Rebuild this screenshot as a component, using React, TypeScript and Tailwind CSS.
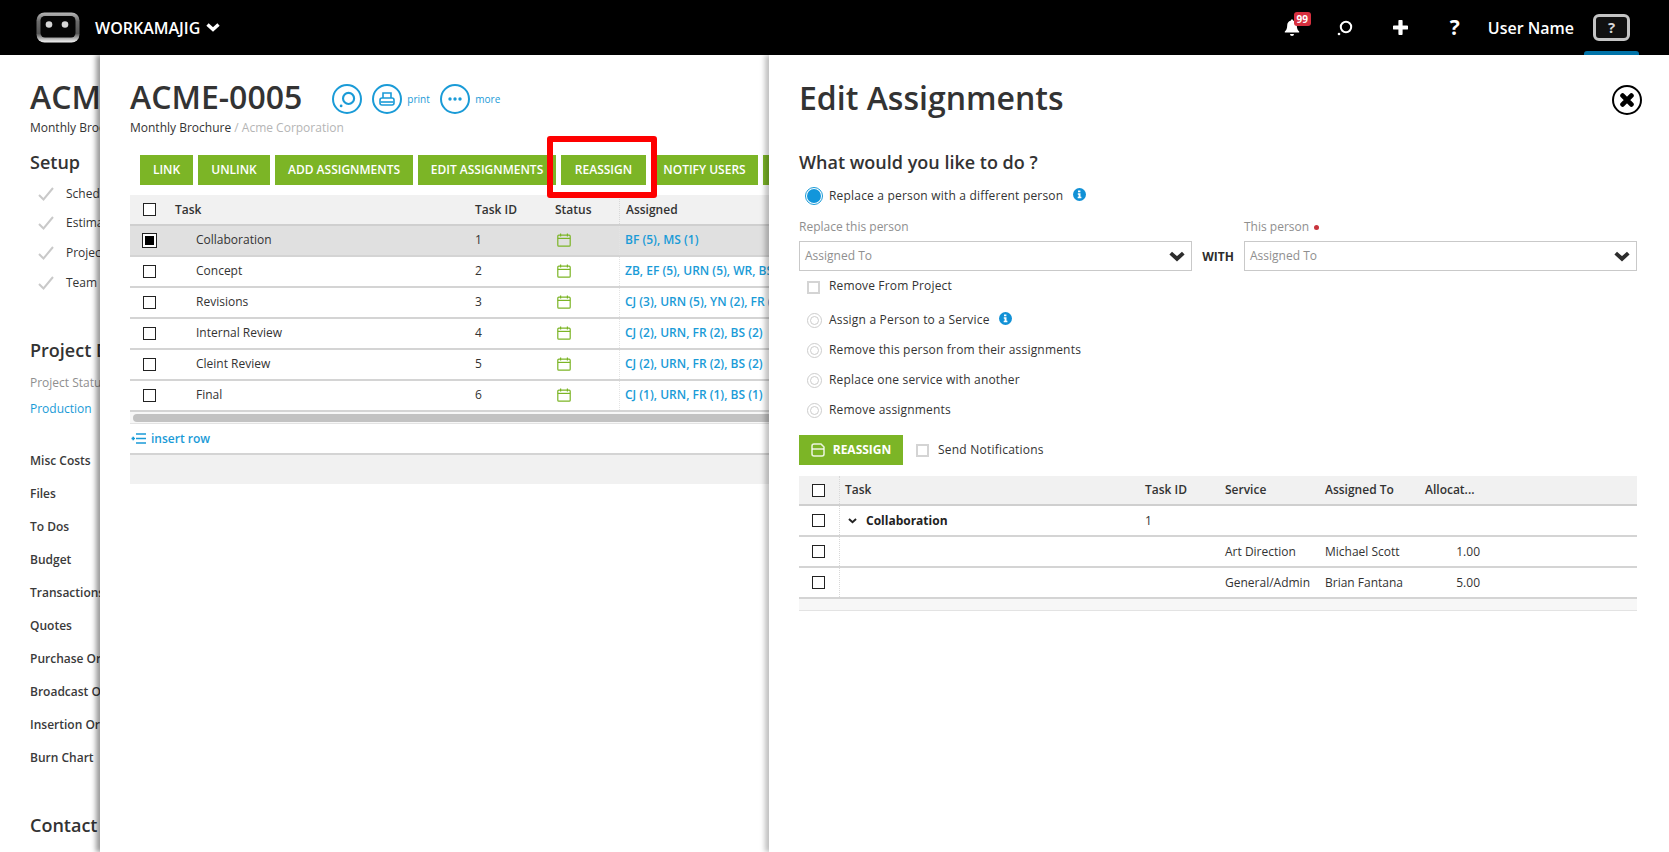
import React from "react";

const BLUE = "text-[#1a9bd7]";

function Logo() {
  return (
    <svg width="44" height="31" viewBox="0 0 44 31">
      <defs>
        <linearGradient id="lg" x1="0" y1="0" x2="0" y2="1">
          <stop offset="0" stopColor="#b8b8b8" />
          <stop offset="0.3" stopColor="#6a6a6a" />
          <stop offset="0.7" stopColor="#555" />
          <stop offset="0.92" stopColor="#d0d0d0" />
          <stop offset="1" stopColor="#f4f4f4" />
        </linearGradient>
      </defs>
      <rect x="0.5" y="0.5" width="43" height="30" rx="8" fill="url(#lg)" />
      <rect x="4.5" y="4" width="35" height="21.5" rx="4.5" fill="#050505" />
      <circle cx="13" cy="12.5" r="3.3" fill="#d6d6d6" />
      <circle cx="29" cy="12.5" r="3.3" fill="#d6d6d6" />
    </svg>
  );
}

function Chevron({ className = "", w = 14, h = 9, sw = 3.4 }: { className?: string; w?: number; h?: number; sw?: number }) {
  return (
    <svg width={w} height={h} viewBox="0 0 14 9" className={className} fill="none" stroke="currentColor" strokeWidth={sw}>
      <path d="M1.5 1.5 7 6.5l5.5-5" />
    </svg>
  );
}

function SearchGlyph({ size = 16, sw = 2 }: { size?: number; sw?: number }) {
  return (
    <svg width={size} height={size} viewBox="0 0 16 16" fill="none" stroke="currentColor" strokeWidth={sw}>
      <circle cx="9" cy="7" r="5.2" />
      <circle cx="2" cy="14" r="1.3" fill="currentColor" stroke="none" />
    </svg>
  );
}

function RoundIcon({ children }: { children: React.ReactNode }) {
  return (
    <span className={`flex h-[30px] w-[30px] items-center justify-center rounded-full border-2 border-[#1a9bd7] ${BLUE}`}>
      {children}
    </span>
  );
}

function Box({ light = false, checked = false }: { light?: boolean; checked?: boolean }) {
  if (checked) {
    return (
      <span className="flex h-[15px] w-[15px] items-center justify-center border border-[#222] bg-white">
        <span className="h-[9px] w-[9px] bg-black" />
      </span>
    );
  }
  return (
    <span className={`block h-[13px] w-[13px] bg-white ${light ? "border-2 border-[#d4d4d4]" : "border-[1.5px] border-[#222]"}`} />
  );
}

function Cal() {
  return (
    <svg width="14" height="14" viewBox="0 0 14 14" fill="none" stroke="#7cb526" strokeWidth="1.2">
      <rect x="0.8" y="2.2" width="12.4" height="11" rx="1" />
      <path d="M0.8 5.4h12.4" />
      <path d="M3.6 0.4v3M10.4 0.4v3" />
    </svg>
  );
}

function Info() {
  return (
    <svg width="13" height="13" viewBox="0 0 13 13">
      <circle cx="6.5" cy="6.5" r="6.5" fill="#1191d6" />
      <path d="M5 2.6h2.4v1.7H5zM4.8 5.2h2.7v3.6h.9v1.5H4.7V8.8h.9V6.7h-.8z" fill="#fff" />
    </svg>
  );
}

function Radio({ on = false }: { on?: boolean }) {
  if (on) {
    return (
      <span className="flex h-[18px] w-[18px] shrink-0 items-center justify-center rounded-full border border-[#1a9bd7] bg-white">
        <span className="h-[14px] w-[14px] rounded-full bg-[#1296db]" />
      </span>
    );
  }
  return (
    <span className="flex h-[15px] w-[15px] shrink-0 items-center justify-center rounded-full border-[1.5px] border-[#cdcdcd] bg-white">
      <span className="h-[9px] w-[9px] rounded-full border-[1.5px] border-[#cdcdcd]" />
    </span>
  );
}

function Btn({ children, className = "" }: { children: React.ReactNode; className?: string }) {
  return (
    <span className={`flex h-[30px] shrink-0 items-center justify-center bg-[#7cb526] text-[12px] font-semibold text-white ${className}`}>
      {children}
    </span>
  );
}

function Select() {
  return (
    <div className="flex h-[30px] items-center justify-between border border-[#c9c9c9] bg-white pl-[5px] pr-[6px] text-[12px] text-[#8f8f8f]">
      <span>Assigned To</span>
      <span className="text-[#2d2d2d]">
        <Chevron w={16} h={11} />
      </span>
    </div>
  );
}

const tasks: [string, string, string, boolean][] = [
  ["Collaboration", "1", "BF (5), MS (1)", true],
  ["Concept", "2", "ZB, EF (5), URN (5), WR, BS (2)", false],
  ["Revisions", "3", "CJ (3), URN (5), YN (2), FR (1)", false],
  ["Internal Review", "4", "CJ (2), URN, FR (2), BS (2)", false],
  ["Cleint Review", "5", "CJ (2), URN, FR (2), BS (2)", false],
  ["Final", "6", "CJ (1), URN, FR (1), BS (1)", false],
];

const sideLinks = ["Misc Costs", "Files", "To Dos", "Budget", "Transactions", "Quotes", "Purchase Orders", "Broadcast Orders", "Insertion Orders", "Burn Chart"];
const setup = ["Schedule", "Estimates", "Project Team", "Team"];

const radios: [string, boolean][] = [
  ["Assign a Person to a Service", true],
  ["Remove this person from their assignments", false],
  ["Replace one service with another", false],
  ["Remove assignments", false],
];

export default function App() {
  return (
    <div className="flex h-[852px] w-[1669px] flex-col overflow-hidden bg-white font-['Open_Sans',sans-serif] text-[#333]">
      {/* top bar */}
      <header className="relative z-30 flex h-[55px] shrink-0 items-center bg-black text-white">
        <div className="ml-[36px] flex items-center">
          <Logo />
          <span className="ml-[15px] text-[16px] font-semibold">WORKAMAJIG</span>
          <Chevron className="ml-[6px]" />
        </div>
        <div className="ml-auto flex items-center">
          <span className="relative flex w-[20px] justify-center">
            <svg width="16" height="17" viewBox="0 0 16 17" fill="#fff">
              <path d="M8 0.5c.8 0 1.2.5 1.3 1.2 2.3.5 3.5 2.4 3.5 4.8 0 3.2 1 4.7 2.4 6v1H.8v-1c1.4-1.3 2.4-2.8 2.4-6 0-2.4 1.2-4.3 3.5-4.8C6.8 1 7.2.5 8 .5z" />
              <path d="M6 15h4a2 2 0 0 1-4 0z" />
            </svg>
            <span className="absolute left-[12px] top-[-7px] flex h-[14px] w-[17px] items-center justify-center rounded-[3px] bg-[#d7303f] text-[10px] font-bold leading-none text-white">
              99
            </span>
          </span>
          <span className="ml-[35px]">
            <SearchGlyph />
          </span>
          <svg className="ml-[40px]" width="15" height="15" viewBox="0 0 15 15" fill="#fff">
            <path d="M5.4 1.4a2.1 2.1 0 0 1 4.2 0v4h4a2.1 2.1 0 0 1 0 4.2h-4v4a2.1 2.1 0 0 1-4.2 0v-4h-4a2.1 2.1 0 0 1 0-4.2h4z" />
          </svg>
          <span className="ml-[39px] w-[16px] text-center text-[21px] font-bold leading-none">?</span>
          <span className="ml-[25px] text-[16px] font-semibold">User Name</span>
          <span className="relative ml-[19px] mr-[39px] flex h-[27px] w-[37px] items-center justify-center rounded-[6px] border-[3.5px] border-[#c4c4c4] bg-[#111] text-[15px] font-bold text-[#d8d8d8]">
            ?
            <span className="absolute left-[-12px] top-[34px] h-[4px] w-[55px] rounded-t-[3px] bg-[#0073a8]" />
          </span>
        </div>
      </header>

      <div className="flex min-h-0 flex-1">
        {/* left background page */}
        <aside className="w-[100px] shrink-0 overflow-hidden whitespace-nowrap pl-[30px]">
          <h1 className="mt-[20px] h-[44px] text-[32px] font-semibold leading-[44px]">ACME-0005</h1>
          <p className="h-[18px] text-[12px] leading-[18px]">Monthly Brochure</p>
          <h2 className="mt-[12px] h-[26px] text-[18px] font-semibold leading-[26px]">Setup</h2>
          <ul className="mt-[4px]">
            {setup.map((s) => (
              <li key={s} className="flex h-[29.6px] items-center">
                <svg className="ml-[8px] shrink-0" width="16" height="14" viewBox="0 0 16 14" fill="none" stroke="#c9c9c9" strokeWidth="2">
                  <path d="M1 8l4.5 4.5L15 1" />
                </svg>
                <span className="ml-[12px] text-[12px]">{s}</span>
              </li>
            ))}
          </ul>
          <h2 className="mt-[40px] h-[26px] text-[18px] font-semibold leading-[26px]">Project Details</h2>
          <p className="mt-[11px] h-[18px] text-[12px] leading-[18px] text-[#8f8f8f]">Project Status</p>
          <p className={`mt-[8px] h-[18px] text-[12px] leading-[18px] ${BLUE}`}>Production</p>
          <ul className="mt-[26px]">
            {sideLinks.map((s) => (
              <li key={s} className="flex h-[33px] items-center text-[12px] font-semibold text-[#3a3a3a]">
                {s}
              </li>
            ))}
          </ul>
          <h2 className="mt-[38px] h-[26px] text-[18px] font-semibold leading-[26px]">Contact</h2>
        </aside>

        {/* middle panel */}
        <section className="relative z-10 w-[669px] shrink-0 overflow-hidden bg-white pl-[30px] shadow-[-4px_0_5px_rgba(0,0,0,0.4)]">
          <div className="mt-[20px] flex h-[44px] items-center whitespace-nowrap">
            <h1 className="text-[32px] font-semibold leading-[44px]">ACME-0005</h1>
            <span className="ml-[30px] mt-[4px]">
              <RoundIcon>
                <SearchGlyph size={17} />
              </RoundIcon>
            </span>
            <span className="ml-[10px] mt-[4px]">
              <RoundIcon>
                <svg width="16" height="15" viewBox="0 0 16 15" fill="none" stroke="currentColor" strokeWidth="1.6">
                  <path d="M4 6V1h8v5" />
                  <rect x="1" y="6" width="14" height="7" rx="2" />
                  <path d="M1.5 10h13" />
                </svg>
              </RoundIcon>
            </span>
            <span className={`ml-[5px] mt-[4px] w-[24px] text-[10px] ${BLUE}`}>print</span>
            <span className="ml-[9px] mt-[4px]">
              <RoundIcon>
                <svg width="14" height="4" viewBox="0 0 14 4" fill="currentColor">
                  <circle cx="2" cy="2" r="1.7" />
                  <circle cx="7" cy="2" r="1.7" />
                  <circle cx="12" cy="2" r="1.7" />
                </svg>
              </RoundIcon>
            </span>
            <span className={`ml-[5px] mt-[4px] text-[10px] ${BLUE}`}>more</span>
          </div>
          <p className="h-[18px] whitespace-nowrap text-[12px] leading-[18px]">
            Monthly Brochure <span className="text-[#b5b5b5]">/ Acme Corporation</span>
          </p>

          <div className="relative ml-[10px] mt-[18px] flex gap-[5px]">
            <Btn className="w-[53px]">LINK</Btn>
            <Btn className="w-[72px]">UNLINK</Btn>
            <Btn className="w-[138px]">ADD ASSIGNMENTS</Btn>
            <Btn className="w-[138px]">EDIT ASSIGNMENTS</Btn>
            <Btn className="w-[85px]">REASSIGN</Btn>
            <Btn className="w-[107px]">NOTIFY USERS</Btn>
            <Btn className="w-[60px]">&nbsp;</Btn>
            <span className="absolute left-[407px] top-[-19px] h-[62px] w-[110px] rounded-[3px] border-[6px] border-[#fe0000]" />
          </div>

          <div className="mt-[10px] w-[800px] text-[12px]">
            <div className="grid h-[31px] grid-cols-[45px_300px_80px_64px_1fr] items-center border-b-2 border-[#cfcfcf] bg-[#f1f1f1] font-semibold">
              <span className="pl-[13px]">
                <Box />
              </span>
              <span>Task</span>
              <span>Task ID</span>
              <span>Status</span>
              <span className="flex h-full items-center border-l border-dotted border-[#d8d8d8] pl-[6px]">Assigned</span>
            </div>
            {tasks.map(([name, id, who, sel]) => (
              <div
                key={name}
                className={`grid h-[31px] grid-cols-[45px_300px_80px_64px_1fr] items-center border-b-2 border-[#d4d4d4] ${sel ? "bg-[#e0e0e0]" : "bg-white"}`}
              >
                <span className="pl-[12px]">
                  {sel ? <Box checked /> : <span className="ml-[1px] block"><Box /></span>}
                </span>
                <span className="pb-[2px] pl-[21px]">{name}</span>
                <span className="pb-[2px]">{id}</span>
                <span className="pb-[2px] pl-[2px]">
                  <Cal />
                </span>
                <span className={`flex h-full items-center whitespace-nowrap border-l border-dotted border-[#e4e4e4] pb-[2px] pl-[5px] font-semibold ${BLUE}`}>{who}</span>
              </div>
            ))}
            <div className="flex h-[12px] items-center border-b border-[#e3e3e3] bg-[#f7f7f7] pl-[3px]">
              <span className="block h-[8px] w-full rounded-full bg-[#c2c2c2]" />
            </div>
            <div className={`flex h-[29px] items-center gap-[5px] pl-[1px] ${BLUE}`}>
              <svg width="15" height="11" viewBox="0 0 15 11" fill="none" stroke="currentColor" strokeWidth="1.6">
                <path d="M5 1h10M5 5.5h10M5 10h10M0.5 5.5h3.5M2.2 3.8v3.4" />
              </svg>
              <span className="font-semibold">insert row</span>
            </div>
            <div className="h-[31px] border-t-2 border-[#d4d4d4] bg-[#f1f1f1]" />
          </div>
        </section>

        {/* right panel */}
        <section className="relative z-20 min-w-0 flex-1 bg-white pl-[30px] pr-[32px] text-[12px] shadow-[-4px_0_5px_rgba(0,0,0,0.25)]">
          <div className="mt-[20px] flex h-[46px] items-center justify-between">
            <h1 className="text-[32px] font-semibold leading-[46px]">Edit Assignments</h1>
            <span className="mr-[-5px] mt-[4px] flex h-[30px] w-[30px] items-center justify-center rounded-full border-2 border-black">
              <svg width="14" height="14" viewBox="0 0 16 16" stroke="#000" strokeWidth="5.5" strokeLinecap="round">
                <path d="M3 3l10 10M13 3L3 13" />
              </svg>
            </span>
          </div>
          <h2 className="mt-[28px] h-[26px] text-[18px] font-semibold leading-[26px]">What would you like to do ?</h2>

          <div className="mt-[11px] flex h-[20px] items-center pl-[6px]">
            <Radio on />
            <span className="ml-[6px] tracking-[0.19px]">Replace a person with a different person</span>
            <span className="mb-[3px] ml-[10px]">
              <Info />
            </span>
          </div>

          <div className="mt-[12px] grid grid-cols-[393px_52px_1fr]">
            <div>
              <div className="mb-[5px] h-[18px] leading-[18px] text-[#8f8f8f]">Replace this person</div>
              <Select />
            </div>
            <div className="flex items-end justify-center pb-[5px] font-bold text-[#2d2d2d]">WITH</div>
            <div>
              <div className="mb-[5px] flex h-[18px] items-center gap-[5px] text-[#8f8f8f]">
                This person
                <span className="h-[5px] w-[5px] rounded-full bg-[#c8343c]" />
              </div>
              <Select />
            </div>
          </div>

          <div className="mt-[8px] flex h-[16px] items-center pl-[8px]">
            <Box light />
            <span className="mb-[3px] ml-[9px] tracking-[0.15px]">Remove From Project</span>
          </div>

          <div className="mt-[10px]">
            {radios.map(([label, info]) => (
              <div key={label} className="flex h-[30px] items-center pl-[8px]">
                <Radio />
                <span className="ml-[7px] tracking-[0.19px]">{label}</span>
                {info && (
                  <span className="mb-[3px] ml-[9px]">
                    <Info />
                  </span>
                )}
              </div>
            ))}
          </div>

          <div className="mt-[10px] flex items-center">
            <Btn className="w-[104px] gap-[8px]">
              <svg width="14" height="14" viewBox="0 0 14 14" fill="none" stroke="#fff" strokeOpacity="0.85" strokeWidth="1.5">
                <path d="M3 1h7l3 3v7a2 2 0 0 1-2 2H3a2 2 0 0 1-2-2V3a2 2 0 0 1 2-2z" />
                <path d="M1 6h12" />
              </svg>
              <span className="font-bold">REASSIGN</span>
            </Btn>
            <span className="ml-[13px]">
              <Box light />
            </span>
            <span className="ml-[9px] tracking-[0.22px]">Send Notifications</span>
          </div>

          <div className="mt-[11px]">
            <div className="grid h-[30px] grid-cols-[41px_305px_80px_100px_100px_1fr] items-center border-b-2 border-[#cfcfcf] bg-[#f1f1f1] font-semibold">
              <span className="flex h-full items-center border-r border-dotted border-[#d8d8d8] pl-[13px]">
                <Box />
              </span>
              <span className="pl-[5px]">Task</span>
              <span>Task ID</span>
              <span>Service</span>
              <span>Assigned To</span>
              <span>Allocat...</span>
            </div>
            <div className="grid h-[31px] grid-cols-[41px_305px_80px_100px_100px_1fr] items-center border-b-2 border-[#d4d4d4]">
              <span className="flex h-full items-center border-r border-dotted border-[#d8d8d8] pl-[13px]">
                <Box />
              </span>
              <span className="flex items-center pl-[8px] font-bold text-[#222]">
                <Chevron w={9} h={6} sw={3} />
                <span className="ml-[9px]">Collaboration</span>
              </span>
              <span>1</span>
            </div>
            {[
              ["Art Direction", "Michael Scott", "1.00"],
              ["General/Admin", "Brian Fantana", "5.00"],
            ].map(([svc, who, amt]) => (
              <div key={svc} className="grid h-[31px] grid-cols-[41px_305px_80px_100px_100px_1fr] items-center border-b-2 border-[#d4d4d4]">
                <span className="flex h-full items-center border-r border-dotted border-[#d8d8d8] pl-[13px]">
                  <Box />
                </span>
                <span />
                <span />
                <span>{svc}</span>
                <span>{who}</span>
                <span className="w-[55px] text-right">{amt}</span>
              </div>
            ))}
            <div className="h-[12px] border-b border-[#e3e3e3] bg-[#f7f7f7]" />
          </div>
        </section>
      </div>
    </div>
  );
}
